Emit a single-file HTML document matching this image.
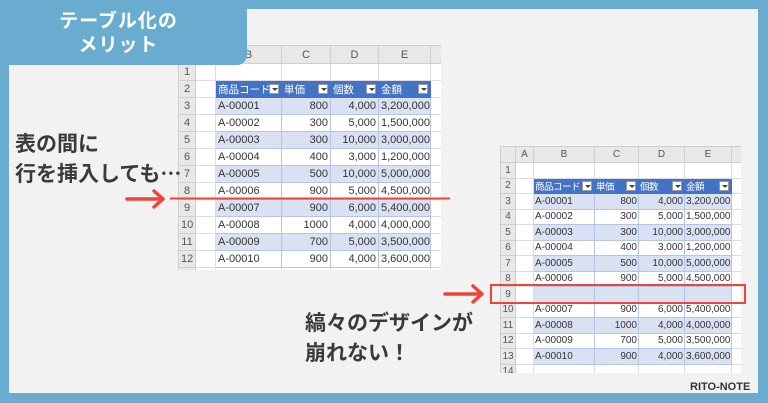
<!DOCTYPE html>
<html><head><meta charset="utf-8"><style>
*{margin:0;padding:0;box-sizing:border-box}
body{width:768px;height:403px;background:#6aabd0;position:relative;overflow:hidden;font-family:"Liberation Sans","Noto Sans CJK JP",sans-serif}
.panel{position:absolute;left:9px;top:9px;width:749px;height:384px;background:#f2f2f2}
.tab{position:absolute;left:0;top:0;width:247px;height:65px;background:#6aabd0;border-bottom-right-radius:10px;color:#fff;font-weight:bold;font-size:19px;line-height:24px;text-align:center;padding-top:8px;padding-right:10px;font-family:"Noto Sans CJK JP",sans-serif;letter-spacing:1px}
.sheet{position:absolute;background:#fff;overflow:hidden}
table{border-collapse:collapse;table-layout:fixed;font-family:"Liberation Sans","Noto Sans CJK JP",sans-serif;color:#333}
td{border:1px solid #dcdcdc;white-space:nowrap;overflow:hidden;padding:0 2px;font-size:11px}
td.h{background:#e8e8e8;color:#555;text-align:center;border-color:#cfcfcf}
td.r{text-align:right}
tr.hd td.t{background:#4472c4;color:#fff;border-color:#4472c4;font-size:10.5px;position:relative}
tr.s td.t{background:#d9e1f2;border-color:#b4c6e7}
tr.w td.t{background:#fff;border-color:#b4c6e7}
.sm td{font-size:10px;padding:0 1px}
.sm tr.hd td.t{font-size:9.5px;letter-spacing:-0.5px}
.dd{position:absolute;right:2px;top:50%;margin-top:-5px;width:10px;height:10px;background:#fff;border:1px solid #999}
.dd:after{content:"";position:absolute;left:2px;top:3px;border-left:3px solid transparent;border-right:3px solid transparent;border-top:3px solid #444}
.big{position:absolute;font-family:"Noto Sans CJK JP",sans-serif;font-weight:bold;color:#3a3a3a;font-size:21px;line-height:30px}
</style></head><body>
<div class="panel"></div>

<div class="sheet" style="left:178px;top:45px;width:263px;height:225px">
<table style="width:263px">
<colgroup><col style="width:17px"><col style="width:20px"><col style="width:66px"><col style="width:49px"><col style="width:48px"><col style="width:52px"><col style="width:11px"></colgroup>
<tr style="height:18px"><td class="h"></td><td class="h">A</td><td class="h">B</td><td class="h">C</td><td class="h">D</td><td class="h">E</td><td class="h"></td></tr>
<tr style="height:17px"><td class="h">1</td><td></td><td></td><td></td><td></td><td></td><td></td></tr>
<tr class="hd" style="height:17px"><td class="h">2</td><td></td><td class="t">商品コード<span class="dd"></span></td><td class="t">単価<span class="dd"></span></td><td class="t">個数<span class="dd"></span></td><td class="t">金額<span class="dd"></span></td><td></td></tr>
<tr class="s" style="height:17px"><td class="h">3</td><td></td><td class="t">A-00001</td><td class="t r">800</td><td class="t r">4,000</td><td class="t r">3,200,000</td><td></td></tr>
<tr class="w" style="height:17px"><td class="h">4</td><td></td><td class="t">A-00002</td><td class="t r">300</td><td class="t r">5,000</td><td class="t r">1,500,000</td><td></td></tr>
<tr class="s" style="height:17px"><td class="h">5</td><td></td><td class="t">A-00003</td><td class="t r">300</td><td class="t r">10,000</td><td class="t r">3,000,000</td><td></td></tr>
<tr class="w" style="height:17px"><td class="h">6</td><td></td><td class="t">A-00004</td><td class="t r">400</td><td class="t r">3,000</td><td class="t r">1,200,000</td><td></td></tr>
<tr class="s" style="height:17px"><td class="h">7</td><td></td><td class="t">A-00005</td><td class="t r">500</td><td class="t r">10,000</td><td class="t r">5,000,000</td><td></td></tr>
<tr class="w" style="height:17px"><td class="h">8</td><td></td><td class="t">A-00006</td><td class="t r">900</td><td class="t r">5,000</td><td class="t r">4,500,000</td><td></td></tr>
<tr class="s" style="height:17px"><td class="h">9</td><td></td><td class="t">A-00007</td><td class="t r">900</td><td class="t r">6,000</td><td class="t r">5,400,000</td><td></td></tr>
<tr class="w" style="height:17px"><td class="h">10</td><td></td><td class="t">A-00008</td><td class="t r">1000</td><td class="t r">4,000</td><td class="t r">4,000,000</td><td></td></tr>
<tr class="s" style="height:17px"><td class="h">11</td><td></td><td class="t">A-00009</td><td class="t r">700</td><td class="t r">5,000</td><td class="t r">3,500,000</td><td></td></tr>
<tr class="w" style="height:17px"><td class="h">12</td><td></td><td class="t">A-00010</td><td class="t r">900</td><td class="t r">4,000</td><td class="t r">3,600,000</td><td></td></tr>
<tr style="height:17px"><td class="h">13</td><td></td><td></td><td></td><td></td><td></td><td></td></tr>
</table></div>

<div class="sheet" style="left:500px;top:146px;width:241px;height:227px">
<table class="sm" style="width:241px">
<colgroup><col style="width:15px"><col style="width:18px"><col style="width:61px"><col style="width:44px"><col style="width:46px"><col style="width:47px"><col style="width:10px"></colgroup>
<tr style="height:16px"><td class="h"></td><td class="h">A</td><td class="h">B</td><td class="h">C</td><td class="h">D</td><td class="h">E</td><td class="h"></td></tr>
<tr style="height:15.5px"><td class="h">1</td><td></td><td></td><td></td><td></td><td></td><td></td></tr>
<tr class="hd" style="height:15.5px"><td class="h">2</td><td></td><td class="t">商品コード<span class="dd"></span></td><td class="t">単価<span class="dd"></span></td><td class="t">個数<span class="dd"></span></td><td class="t">金額<span class="dd"></span></td><td></td></tr>
<tr class="s" style="height:15.5px"><td class="h">3</td><td></td><td class="t">A-00001</td><td class="t r">800</td><td class="t r">4,000</td><td class="t r">3,200,000</td><td></td></tr>
<tr class="w" style="height:15.5px"><td class="h">4</td><td></td><td class="t">A-00002</td><td class="t r">300</td><td class="t r">5,000</td><td class="t r">1,500,000</td><td></td></tr>
<tr class="s" style="height:15.5px"><td class="h">5</td><td></td><td class="t">A-00003</td><td class="t r">300</td><td class="t r">10,000</td><td class="t r">3,000,000</td><td></td></tr>
<tr class="w" style="height:15.5px"><td class="h">6</td><td></td><td class="t">A-00004</td><td class="t r">400</td><td class="t r">3,000</td><td class="t r">1,200,000</td><td></td></tr>
<tr class="s" style="height:15.5px"><td class="h">7</td><td></td><td class="t">A-00005</td><td class="t r">500</td><td class="t r">10,000</td><td class="t r">5,000,000</td><td></td></tr>
<tr class="w" style="height:15.5px"><td class="h">8</td><td></td><td class="t">A-00006</td><td class="t r">900</td><td class="t r">5,000</td><td class="t r">4,500,000</td><td></td></tr>
<tr class="s" style="height:15.5px"><td class="h">9</td><td></td><td class="t"></td><td class="t"></td><td class="t"></td><td class="t"></td><td></td></tr>
<tr class="w" style="height:15.5px"><td class="h">10</td><td></td><td class="t">A-00007</td><td class="t r">900</td><td class="t r">6,000</td><td class="t r">5,400,000</td><td></td></tr>
<tr class="s" style="height:15.5px"><td class="h">11</td><td></td><td class="t">A-00008</td><td class="t r">1000</td><td class="t r">4,000</td><td class="t r">4,000,000</td><td></td></tr>
<tr class="w" style="height:15.5px"><td class="h">12</td><td></td><td class="t">A-00009</td><td class="t r">700</td><td class="t r">5,000</td><td class="t r">3,500,000</td><td></td></tr>
<tr class="s" style="height:15.5px"><td class="h">13</td><td></td><td class="t">A-00010</td><td class="t r">900</td><td class="t r">4,000</td><td class="t r">3,600,000</td><td></td></tr>
<tr style="height:15.5px"><td class="h">14</td><td></td><td></td><td></td><td></td><td></td><td></td></tr>
</table></div>

<div class="tab">テーブル化の<br>メリット</div>

<div style="position:absolute;left:490px;top:284px;width:256px;height:20px;border:2px solid #f0433a"></div>

<svg style="position:absolute;left:0;top:0" width="768" height="403">
<line x1="170" y1="198.5" x2="450" y2="198.5" stroke="#f0433a" stroke-width="2"/>
<g stroke="#f0433a" stroke-width="3.5" fill="none" stroke-linecap="round" stroke-linejoin="round">
<path d="M127 199 H162 M154 191 L163 199 L154 207"/>
<path d="M445 294 H481 M473 286 L482 294 L473 302"/>
</g>
</svg>

<div class="big" style="left:15px;top:128px">表の間に<br>行を挿入しても…</div>
<div class="big" style="left:305px;top:307px">縞々のデザインが<br>崩れない！</div>
<div style="position:absolute;left:690px;top:381px;font-weight:bold;font-size:11px;color:#333">RITO-NOTE</div>
</body></html>
